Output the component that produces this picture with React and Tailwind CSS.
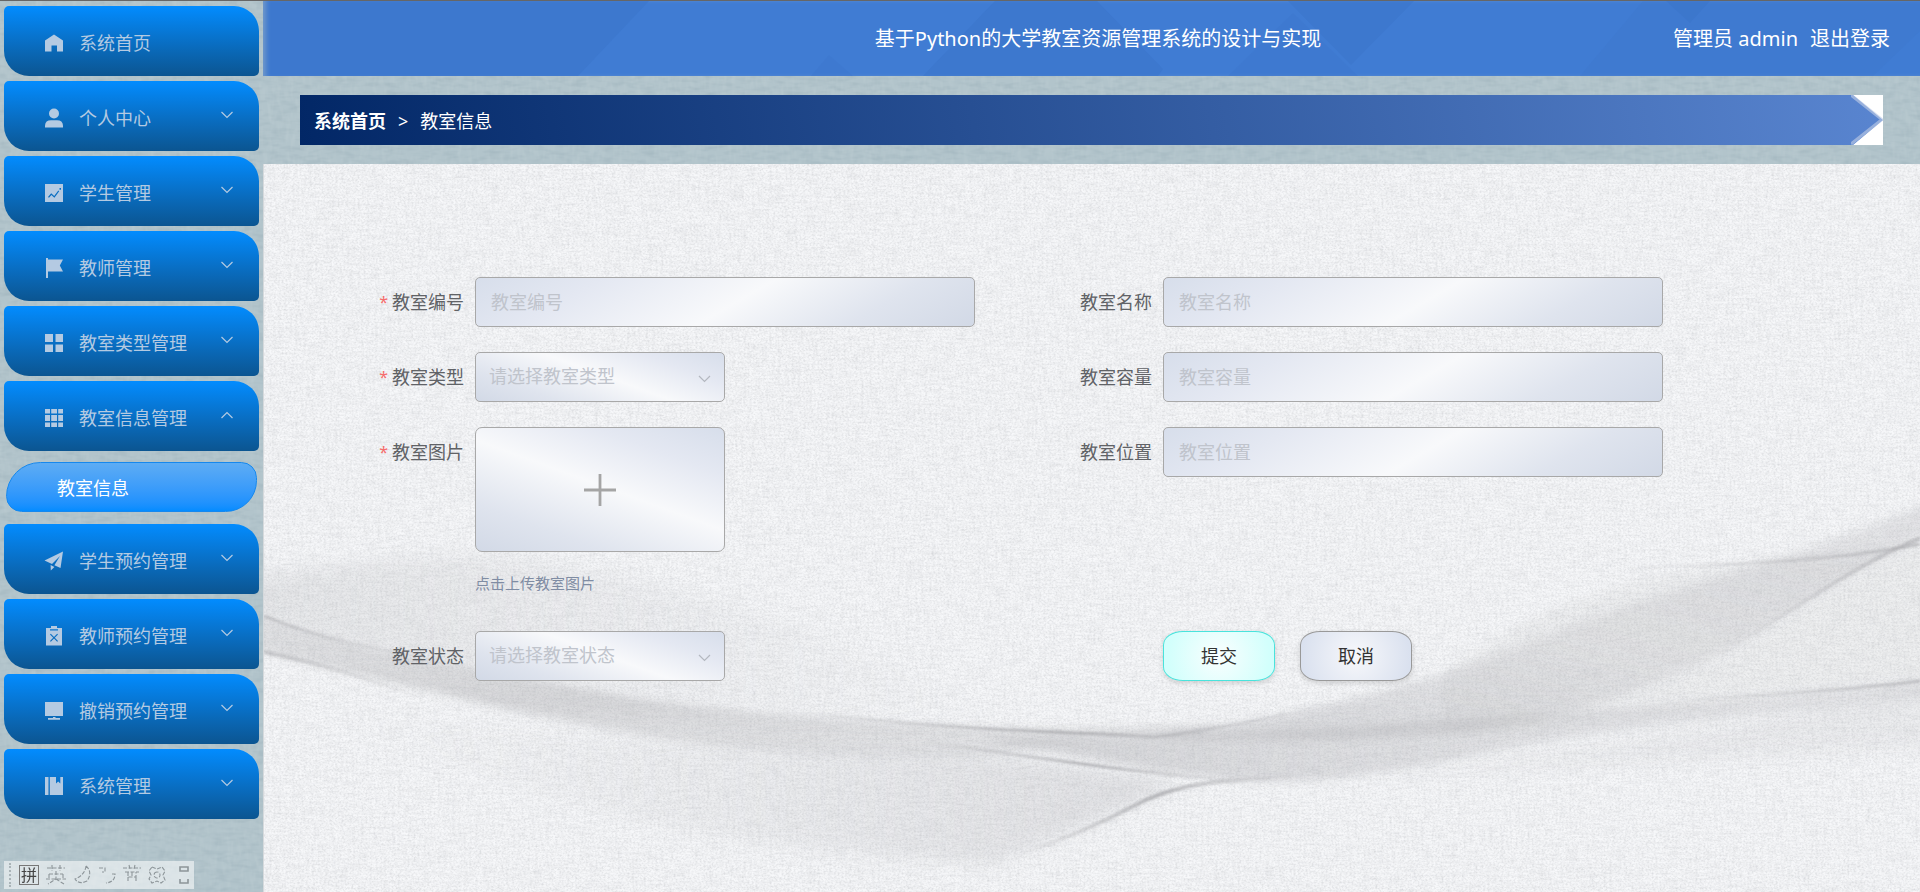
import { useState } from 'react'

const MENU = [
  { id: 'home', label: '系统首页', icon: 'home' },
  { id: 'center', label: '个人中心', icon: 'user', children: ['修改密码', '个人信息'] },
  { id: 'student', label: '学生管理', icon: 'chart', children: ['学生'] },
  { id: 'teacher', label: '教师管理', icon: 'flag', children: ['教师'] },
  { id: 'type', label: '教室类型管理', icon: 'menu', children: ['教室类型'] },
  { id: 'room', label: '教室信息管理', icon: 'grid', children: ['教室信息'] },
  { id: 'sbook', label: '学生预约管理', icon: 'plane', children: ['学生预约'] },
  { id: 'tbook', label: '教师预约管理', icon: 'release', children: ['教师预约'] },
  { id: 'cancel', label: '撤销预约管理', icon: 'platform', children: ['撤销预约'] },
  { id: 'system', label: '系统管理', icon: 'book', children: ['轮播图管理'] },
]

const ICONS = {
  home: <path d="M9 0.5 L18 6.5 V17.5 H12 V11.5 H6.5 V17.5 H0 V6.5 Z" />,
  user: (
    <>
      <circle cx="9" cy="4.5" r="5" />
      <path d="M0 18.5 V16.5 Q0.3 11.3 6 11.3 H12 Q17.7 11.3 18 16.5 V18.5 Z" />
    </>
  ),
  chart: (
    <path
      fillRule="evenodd"
      d="M0 0 H18 V18 H0 Z M3 13 L6.2 9.2 L9.2 12 L13.3 6.6 L14.2 7.3 L9.4 13.8 L6.4 11 L4 13.8 Z M14.5 4 H16 V5.8 H14.5 Z"
    />
  ),
  flag: <path d="M1 -1 H3 V0.5 H18 L14.8 6.5 L18 12.5 H3 V19 H1 Z" />,
  menu: <path d="M0 0 H8 V8 H0 Z M10.5 0 H18 V8 H10.5 Z M0 10.5 H8 V18 H0 Z M10.5 10.5 H18 V18 H10.5 Z" />,
  grid: (
    <path d="M0 0 H5 V4.5 H0 Z M6.2 0 H12 V4.5 H6.2 Z M13.2 0 H18 V4.5 H13.2 Z M0 6 H5 V12 H0 Z M6.2 6 H12 V12 H6.2 Z M13.2 6 H18 V12 H13.2 Z M0 13.5 H5 V18 H0 Z M6.2 13.5 H12 V18 H6.2 Z M13.2 13.5 H18 V18 H13.2 Z" />
  ),
  plane: <path d="M18 -0.5 L15.5 16 L9.4 13.2 L15 4 L7 12 L-0.5 8.6 Z M5.6 13 L9.4 15 L5.8 18.5 Z" />,
  release: (
    <path
      fillRule="evenodd"
      d="M6 -1 H12 V1 H17 V18.5 H1 V1 H6 Z M5 2.2 V3.4 H13 V2.2 Z M9 10 L5.8 6.8 L5 7.6 L8.2 10.8 L5 14 L5.8 14.8 L9 11.6 L12.2 14.8 L13 14 L9.8 10.8 L13 7.6 L12.2 6.8 Z"
    />
  ),
  platform: <path d="M0 0 H18 V14 H0 Z M8 15 H10.5 V16 H15 V17.8 H3 V16 H8 Z" />,
  book: <path d="M0 0 H3.5 V18 H0 Z M4.8 0 H11 V6.5 L13.2 4.5 L15.3 6.5 V0 H18 V18 H4.8 Z" />,
}

function MenuIcon({ name }) {
  return (
    <svg viewBox="0 0 18 18" className="w-[18px] h-[18px] shrink-0 overflow-visible fill-[#b4cae2]" aria-hidden="true">
      {ICONS[name]}
    </svg>
  )
}

function Chevron({ up, className }) {
  return (
    <svg viewBox="0 0 12 8" className={className} fill="none" stroke="currentColor" strokeWidth="1.2" aria-hidden="true">
      {up ? <path d="M0.5 7 L6 1.5 L11.5 7" /> : <path d="M0.5 1 L6 6.5 L11.5 1" />}
    </svg>
  )
}

// 全局底纹
function Texture({ id, frequency, matrix }) {
  return (
    <svg className="absolute inset-0 w-full h-full pointer-events-none" aria-hidden="true">
      <filter id={id} x="0" y="0" width="100%" height="100%" colorInterpolationFilters="sRGB">
        <feTurbulence type="fractalNoise" baseFrequency={frequency} numOctaves="2" seed="7" />
        <feColorMatrix values={matrix} />
      </filter>
      <rect width="100%" height="100%" filter={`url(#${id})`} />
    </svg>
  )
}

function Waves() {
  return (
    <svg
      viewBox="0 0 1657 728"
      preserveAspectRatio="none"
      className="absolute inset-0 w-full h-full pointer-events-none"
      aria-hidden="true"
    >
      <defs>
        <linearGradient id="faint" x1="0" y1="0" x2="1" y2="0">
          <stop offset="0" stopColor="#b9babd" stopOpacity="0.26" />
          <stop offset="1" stopColor="#b9babd" stopOpacity="0" />
        </linearGradient>
        <linearGradient id="band" x1="0" y1="0" x2="0" y2="1">
          <stop offset="0" stopColor="#b2b2b5" stopOpacity="0.25" />
          <stop offset="0.6" stopColor="#b2b2b5" stopOpacity="0.45" />
          <stop offset="1" stopColor="#b2b2b5" stopOpacity="0.22" />
        </linearGradient>
        <linearGradient id="ribbon" x1="0" y1="1" x2="1" y2="0">
          <stop offset="0" stopColor="#b4b4b8" stopOpacity="0.5" />
          <stop offset="0.5" stopColor="#b4b4b8" stopOpacity="0.22" />
          <stop offset="1" stopColor="#b4b4b8" stopOpacity="0.28" />
        </linearGradient>
        <linearGradient id="lower" x1="0" y1="0" x2="1" y2="0">
          <stop offset="0" stopColor="#b4b4b8" stopOpacity="0.5" />
          <stop offset="0.3" stopColor="#b4b4b8" stopOpacity="0.38" />
          <stop offset="1" stopColor="#b4b4b8" stopOpacity="0.22" />
        </linearGradient>
        <linearGradient id="tail" x1="0" y1="0" x2="1" y2="0">
          <stop offset="0" stopColor="#b4b4b8" stopOpacity="0" />
          <stop offset="0.5" stopColor="#b4b4b8" stopOpacity="0.15" />
          <stop offset="1" stopColor="#b4b4b8" stopOpacity="0.32" />
        </linearGradient>
        <linearGradient id="line" x1="0" y1="0" x2="1" y2="0">
          <stop offset="0" stopColor="#a2a2a6" stopOpacity="0" />
          <stop offset="0.5" stopColor="#a2a2a6" stopOpacity="0.7" />
          <stop offset="1" stopColor="#a2a2a6" stopOpacity="0" />
        </linearGradient>
        <linearGradient id="lineOut" x1="0" y1="0" x2="1" y2="0">
          <stop offset="0" stopColor="#a8a8ac" stopOpacity="0.5" />
          <stop offset="1" stopColor="#a8a8ac" stopOpacity="0" />
        </linearGradient>
        <linearGradient id="lineIn" x1="0" y1="0" x2="1" y2="0">
          <stop offset="0" stopColor="#a8a8ac" stopOpacity="0" />
          <stop offset="1" stopColor="#a8a8ac" stopOpacity="0.6" />
        </linearGradient>
        <filter id="crisp" x="-5%" y="-10%" width="110%" height="120%">
          <feGaussianBlur stdDeviation="1.2" />
        </filter>
        <filter id="soft" x="-5%" y="-5%" width="110%" height="110%">
          <feGaussianBlur stdDeviation="4" />
        </filter>
        <filter id="softer" x="-10%" y="-10%" width="120%" height="120%">
          <feGaussianBlur stdDeviation="9" />
        </filter>
      </defs>
      <path filter="url(#softer)" fill="url(#faint)" d="M-30 412 C60 405 110 394 190 392 S520 430 760 560 C420 560 160 500 -30 450 Z" />
      <path filter="url(#softer)" fill="url(#tail)" d="M60 550 C260 566 520 586 730 590 L920 618 C870 640 830 660 730 700 C540 690 330 670 60 550 Z" />
      <g filter="url(#soft)">
        <path fill="url(#band)" d="M-10 450 C90 484 190 500 315 524 S620 562 780 564 C840 565 900 562 960 560 L930 574 C820 570 790 580 730 592 C620 598 480 590 367 570 S90 510 -10 486 Z" />
        <path fill="url(#ribbon)" d="M780 566 C880 576 930 568 980 558 C1090 538 1190 510 1260 480 C1370 432 1520 400 1667 338 V372 C1600 400 1540 440 1510 458 C1450 500 1330 552 1200 568 C1060 582 900 574 780 566 Z" />
        <path fill="url(#lower)" d="M716 576 C790 574 900 574 1010 568 C1230 552 1470 540 1667 517 V534 C1500 550 1390 560 1270 580 C1160 602 1080 618 1000 618 C920 616 850 596 716 576 Z" />
        <path fill="#b4b4b8" fillOpacity="0.12" d="M1180 510 C1300 420 1420 396 1667 380 V520 C1500 530 1370 560 1180 572 Z" />
      </g>
      <path filter="url(#softer)" fill="#c3c3c7" fillOpacity="0.2" d="M1000 618 C1250 600 1480 565 1680 510 V584 C1450 592 1260 608 1000 618 Z" />
      <g fill="none" filter="url(#crisp)">
        <path stroke="url(#lineOut)" strokeWidth="3" d="M0 452 C50 472 90 482 150 490" />
        <path stroke="url(#lineOut)" strokeWidth="4" d="M0 488 C60 500 110 516 160 536" />
        <path stroke="url(#line)" strokeWidth="3" d="M520 546 C680 567 820 568 890 573 C940 568 1000 556 1080 538" />
        <path stroke="url(#line)" strokeWidth="3" d="M660 578 C780 594 850 606 980 618" />
        <path stroke="url(#line)" strokeWidth="4" d="M1040 612 C930 616 900 626 870 642 C840 658 800 676 750 692" />
        <path stroke="url(#lineIn)" strokeWidth="3" d="M1340 404 C1480 402 1590 394 1657 380" />
        <path stroke="url(#lineIn)" strokeWidth="4" d="M1460 488 C1540 440 1590 402 1657 374" />
        <path stroke="url(#lineIn)" strokeWidth="3" d="M1400 538 C1510 530 1590 526 1657 517" />
      </g>
    </svg>
  )
}

function SideMenu() {
  const [open, setOpen] = useState('room')
  return (
    <nav className="relative w-[263px] shrink-0 px-1 pt-[5px]">
      <ul className="flex flex-col gap-[5px]">
        {MENU.map((item) => {
          const isOpen = open === item.id
          return (
            <li key={item.id}>
              <button
                type="button"
                onClick={() => setOpen(isOpen ? '' : item.id)}
                className="flex w-full h-[70px] items-center gap-4 pt-[3px] pl-[41px] pr-[26px] rounded-[5px_25px_5px_25px] bg-linear-to-b from-[#028cff] to-[#0b5591] text-lg text-[#b4cae2]"
              >
                <MenuIcon name={item.icon} />
                <span>{item.label}</span>
                {item.children && <Chevron up={isOpen} className="ml-auto mb-[5px] w-3 h-2 text-[#b4cae2]" />}
              </button>
              {isOpen && item.children && (
                <ul className="px-[2px] pt-[11px] pb-[7px]">
                  {item.children.map((child) => (
                    <li key={child}>
                      <a
                        href="#"
                        className="flex h-[50px] items-center pt-[2px] pl-[50px] rounded-[35px_16px_32px_16px] border border-[#1688ee] bg-linear-to-b from-[#5dacf4] to-[#028cff] text-lg text-white"
                      >
                        {child}
                      </a>
                    </li>
                  ))}
                </ul>
              )}
            </li>
          )
        })}
      </ul>
    </nav>
  )
}

function Header() {
  return (
    <header className="relative h-[75px] bg-[#407cd3] text-xl text-white shadow-[inset_6px_0_5px_-3px_#b1c4cc]">
      <svg viewBox="0 0 1657 75" preserveAspectRatio="none" className="absolute inset-0 w-full h-full" aria-hidden="true">
        <path fill="#3a74ca" fillOpacity="0.55" d="M52 0 H386 L315 75 H0 V48 Z M147 0 L215 75 H0 V0 Z" />
        <path fill="#3a74ca" fillOpacity="0.5" d="M732 0 H834 L900 68 L895 75 H660 Z" />
        <path fill="#3a74ca" fillOpacity="0.5" d="M1025 0 H1151 L1088 64 Z" />
        <path fill="#3a74ca" fillOpacity="0.3" d="M1030 12 L1095 75 H965 Z M566 54 L590 75 H548 Z" />
        <path fill="#3a74ca" fillOpacity="0.5" d="M1403 0 H1447 L1427 22 Z" />
        <path fill="#3a74ca" fillOpacity="0.2" d="M1380 0 H1657 V30 L1610 75 H1317 Z" />
      </svg>
      <div className="relative grid h-full grid-cols-[1fr_auto_1fr] items-center pl-[43px] pr-[30px] pt-px">
        <h1 className="col-start-2">基于Python的大学教室资源管理系统的设计与实现</h1>
        <div className="flex justify-end gap-3">
          <span>管理员 admin</span>
          <button type="button">退出登录</button>
        </div>
      </div>
    </header>
  )
}

function Breadcrumb() {
  return (
    <div className="px-[37px] py-[19px]">
      <nav className="flex h-[50px] bg-linear-[80deg] from-[#022766] to-[#5985d0] text-lg text-white">
        <div className="flex flex-1 items-center gap-3 pl-[14px] pt-px">
          <a href="#" className="font-bold">系统首页</a>
          <span>&gt;</span>
          <span>教室信息</span>
        </div>
        <svg viewBox="0 0 32 50" className="w-8 h-[50px]" aria-hidden="true">
          <path fill="#fff" d="M2 0 H32 V50 H2 L32 25 Z" />
          <path fill="none" stroke="#c3cfe6" strokeWidth="3" strokeOpacity="0.6" d="M0 0 L31 24.5 L0 49" />
        </svg>
      </nav>
    </div>
  )
}

function Field({ id, label, required, children }) {
  return (
    <div className="flex gap-[11px]">
      <label htmlFor={id} className="flex h-[50px] w-[139px] shrink-0 items-center justify-end gap-1 text-lg text-[#606266]">
        {required && <span className="text-base text-[#f56c6c]">*</span>}
        {label}
      </label>
      <div className="min-w-0 flex-1">{children}</div>
    </div>
  )
}

function TextField({ id, label, required }) {
  return (
    <Field id={id} label={label} required={required}>
      <input
        id={id}
        type="text"
        placeholder={label}
        className="w-full max-w-[500px] h-[50px] px-[15px] pb-px rounded-[5px] border border-[#a8a8a8] bg-[linear-gradient(150deg,#d7deeb_0%,#e4e8f2_22%,#f8f9fb_52%,#dfe4ee_78%,#d2d9e6_100%)] text-lg text-[#606266] placeholder:text-[#c0c4cc] outline-none"
      />
    </Field>
  )
}

function SelectField({ id, label, required, placeholder, options }) {
  const [value, setValue] = useState('')
  return (
    <Field id={id} label={label} required={required}>
      <div className="relative w-[250px]">
        <select
          id={id}
          value={value}
          onChange={(e) => setValue(e.target.value)}
          className="w-full h-[50px] appearance-none px-[13px] pb-[2px] rounded-[5px] border border-[#a8a8a8] bg-[linear-gradient(20deg,#d2d9e6_0%,#dfe4ee_22%,#f8f9fb_52%,#e4e8f2_78%,#d7deeb_100%)] text-lg text-[#c0c4cc] outline-none"
        >
          <option value="">{placeholder}</option>
          {options.map((o) => (
            <option key={o}>{o}</option>
          ))}
        </select>
        <Chevron className="absolute right-[14px] top-[23px] w-[13px] h-2 text-[#b4b8c0] pointer-events-none" />
      </div>
    </Field>
  )
}

function RoomForm() {
  return (
    <form
      onSubmit={(e) => e.preventDefault()}
      className="relative grid grid-cols-2 gap-y-[25px] pt-[113px] pl-[61px] pr-[219px]"
    >
      <TextField id="code" label="教室编号" required />
      <TextField id="name" label="教室名称" />
      <SelectField id="type" label="教室类型" required placeholder="请选择教室类型" options={['多媒体教室', '普通教室']} />
      <TextField id="capacity" label="教室容量" />
      <Field id="photo" label="教室图片" required>
        <button
          id="photo"
          type="button"
          className="flex w-[250px] h-[125px] items-center justify-center rounded-[7px] border border-[#a8a8a8] bg-[linear-gradient(20deg,#d2d9e6_0%,#dfe4ee_22%,#f8f9fb_52%,#e4e8f2_78%,#d7deeb_100%)]"
        >
          <svg viewBox="0 0 32 32" className="w-8 h-8" stroke="#a5a5a5" strokeWidth="2.8" aria-hidden="true">
            <path d="M0 16 H32 M16 0 V32" />
          </svg>
        </button>
        <p className="mt-[19px] mb-[11px] text-[15px] leading-6 text-[#7f8ca3]">点击上传教室图片</p>
      </Field>
      <TextField id="place" label="教室位置" />
      <SelectField id="state" label="教室状态" placeholder="请选择教室状态" options={['可预约', '不可预约']} />
      <div className="flex gap-[25px] pl-[150px] text-lg text-[#333]">
        <button
          type="submit"
          className="w-28 h-[50px] rounded-[20px/14px] border border-[#49e3dc] bg-[radial-gradient(circle,#fafefe_0%,#d2fffc_85%)] shadow-[0_2px_5px_rgba(0,0,0,0.15)]"
        >
          提交
        </button>
        <button
          type="button"
          className="w-28 h-[50px] rounded-[20px/14px] border border-[#999] bg-[radial-gradient(circle,#f7f8fb_0%,#dae1ef_90%)] shadow-[0_2px_5px_rgba(0,0,0,0.15)]"
        >
          取消
        </button>
      </div>
    </form>
  )
}

// 输入法悬浮条
function ImeBar() {
  return (
    <div className="fixed left-1 bottom-[3px] flex h-7 w-[190px] items-center gap-[5px] bg-white/55 pl-[5px] text-[#777]">
      <div className="h-6 border-l-2 border-dotted border-[#aab4b8]" />
      <span className="ml-[3px] flex w-5 h-5 items-center justify-center border border-[#777] text-base leading-none text-[#444]">拼</span>
      <svg viewBox="0 0 150 24" className="w-[150px] h-6" fill="none" stroke="#8d9599" strokeWidth="1.1" strokeDasharray="4 1.5" aria-hidden="true">
        <path d="M3 5 H21 M8 2 V8 M16 2 V8 M5 11 H19 M5 11 V15 M19 11 V15 M2 16 H22 M12 8 V16 L4 21 M12 16 L20 21" />
        <path d="M42 3 Q49 9 43 18 M42 3 Q41 12 31 16 Q35 22 43 18" />
        <path d="M55 5 H61 V9 H58 M68 11 H71 Q71 19 62 20" />
        <path d="M79 5 H97 M85 2 L86 6 M91 2 L90 6 M81 9 H95 M84 9 V14 H92 V9 M88 9 V14 M84 14 V19 M92 14 V19" />
        <path d="M108 4 L113 6 L118 4 L121 8 L119 12 L121 17 L117 20 L113 18 L108 20 L105 16 L107 12 L105 8 Z M113 9 A3 3 0 1 0 113.1 9" />
        <path strokeWidth="1.6" strokeDasharray="none" d="M136 4 H144 V8 H136 Z M136 16 V20 H144 V16" />
      </svg>
    </div>
  )
}

export default function App() {
  return (
    <div className="relative flex min-h-screen border-t border-[#666] bg-[#b2c4cb] font-['Noto_Sans','Noto_Sans_CJK_SC',sans-serif]">
      <Texture id="cloth" frequency="0.07 0.22" matrix="0 0 0 0 0.45  0 0 0 0 0.55  0 0 0 0 0.6  0.4 0 0 0 -0.17" />
      <Texture id="clothWarp" frequency="0.22 0.07" matrix="0 0 0 0 0.8  0 0 0 0 0.85  0 0 0 0 0.86  0.5 0 0 0 -0.22" />
      <div className="relative flex w-full">
        <SideMenu />
        <div className="flex min-w-0 flex-1 flex-col">
          <Header />
          <Breadcrumb />
          <main className="relative flex-1 overflow-hidden border-l border-[#d5d9dc] bg-[#f7f8fa]">
            <Waves />
            <Texture id="paper" frequency="0.5 0.55" matrix="0 0 0 0 0.6  0 0 0 0 0.61  0 0 0 0 0.63  0.5 0 0 0 -0.2" />
            <Texture id="weft" frequency="0.05 0.35" matrix="0 0 0 0 0.6  0 0 0 0 0.61  0 0 0 0 0.63  0.22 0 0 0 -0.09" />
            <Texture id="warp" frequency="0.35 0.05" matrix="0 0 0 0 0.6  0 0 0 0 0.61  0 0 0 0 0.63  0.22 0 0 0 -0.09" />
            <RoomForm />
          </main>
        </div>
      </div>
      <ImeBar />
    </div>
  )
}
